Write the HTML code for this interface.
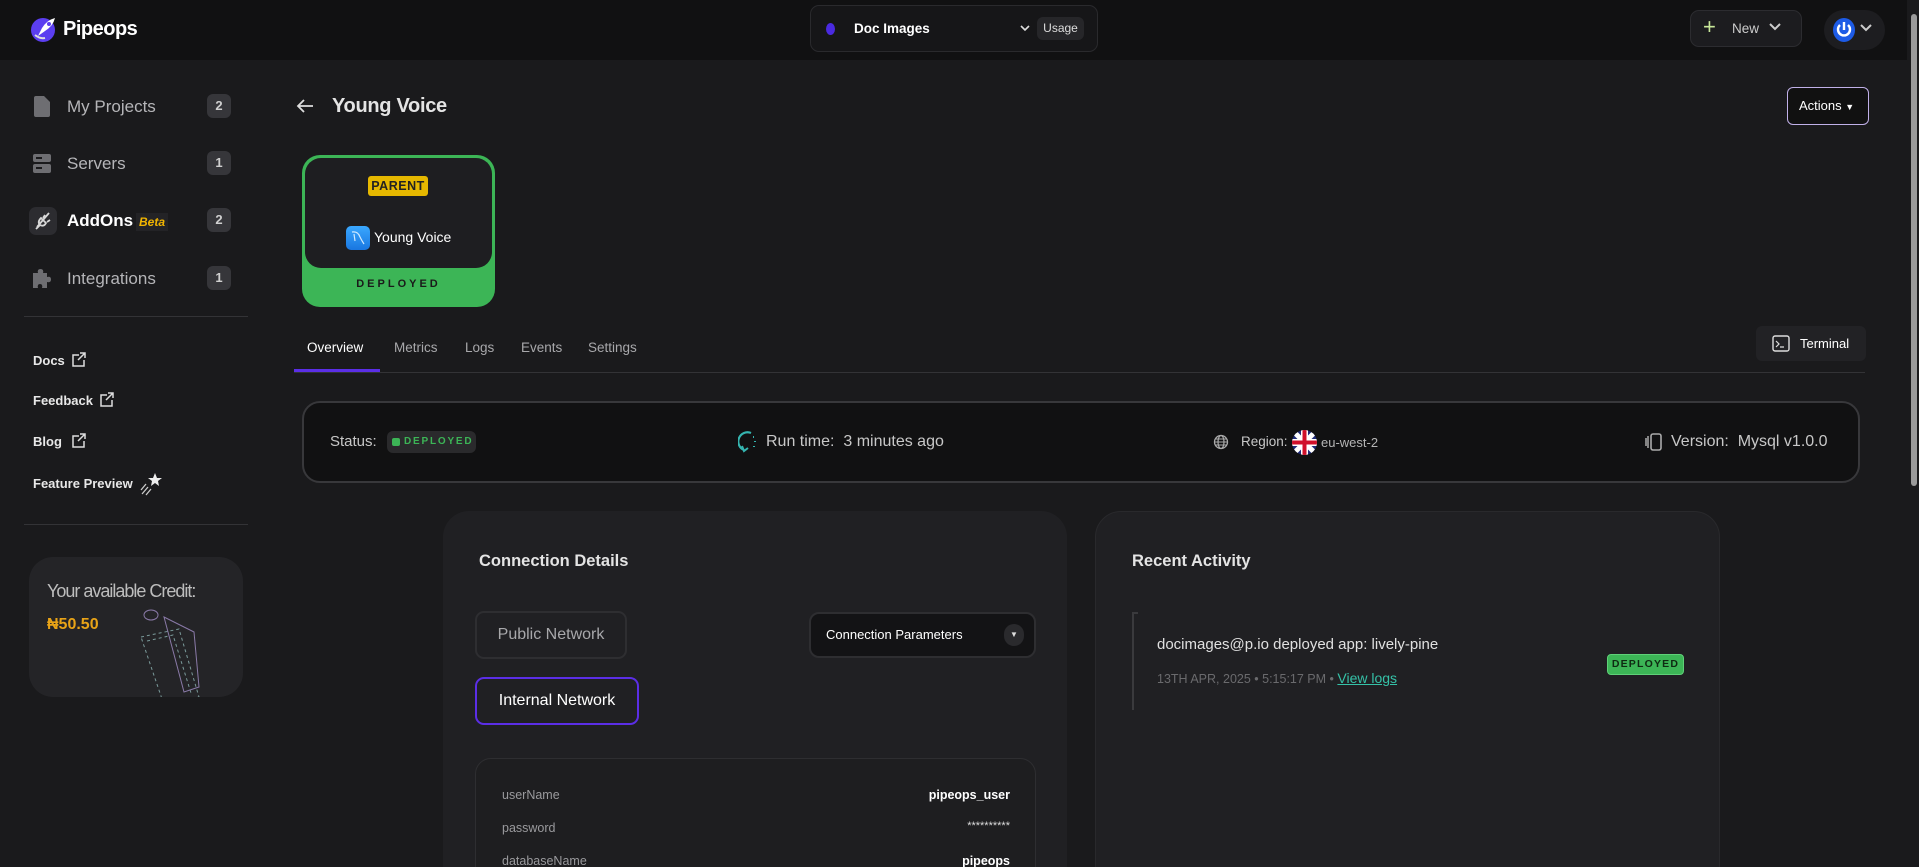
<!DOCTYPE html>
<html><head><meta charset="utf-8"><style>
*{box-sizing:border-box;margin:0;padding:0}
html,body{width:1919px;height:867px;overflow:hidden}
body{background:#1a1a1c;font-family:"Liberation Sans",sans-serif;color:#e8e8e8;position:relative}
.a{position:absolute}
.hdr{left:0;top:0;width:1907px;height:60px;background:#111112}
.sb{right:0;top:0;width:12px;height:867px;background:#1a1a1c}
.nav{font-size:17px;color:#b5b5b8;left:67px}
.badge{left:207px;width:24px;height:24px;border-radius:6px;background:#36363a;color:#d0d0d0;font-size:13px;font-weight:bold;text-align:center;line-height:24px}
.lnk{left:33px;font-size:13px;font-weight:bold;color:#e8e8e8}
.tab{top:340px;font-size:13.5px;color:#a8a8ab}
.row{font-size:12.5px}
</style></head><body>
<div class="a hdr"></div>
<svg class="a" style="left:30px;top:15px" width="28" height="28" viewBox="0 0 28 28"><circle cx="13" cy="15" r="12" fill="#5b3ef0"/><path d="M8 21 L12 13 Q17 5 25 3 Q23 11 15 16 Z" fill="#fff"/><circle cx="19" cy="9" r="2" fill="#5b3ef0"/><path d="M5 20 Q10 24 15 23" stroke="#ddd" stroke-width="2" fill="none"/></svg>
<div class="a" style="left:63px;top:18px;font-size:20px;font-weight:bold;color:#fff;letter-spacing:-0.5px">Pipeops</div>
<div class="a" style="left:810px;top:5px;width:288px;height:47px;border:1px solid #2a2a2d;border-radius:9px;background:#161618"></div>
<div class="a" style="left:826px;top:23px;width:9px;height:12px;border-radius:50%;background:#4a2ae0"></div>
<div class="a" style="left:854px;top:21px;font-size:13.5px;font-weight:bold;color:#fff">Doc Images</div>
<svg class="a" style="left:1020px;top:25px" width="10" height="7"><path d="M1 1 L5 5 L9 1" stroke="#ddd" stroke-width="1.6" fill="none"/></svg>
<div class="a" style="left:1037px;top:17px;width:47px;height:23px;border-radius:6px;background:#262629;font-size:12px;color:#ddd;text-align:center;line-height:23px">Usage</div>
<div class="a" style="left:1690px;top:10px;width:112px;height:37px;border:1px solid #2c2c30;border-radius:9px;background:#1c1c1f"></div>
<div class="a" style="left:1703px;top:16px;font-size:22px;color:#c8e89a;line-height:22px">+</div>
<div class="a" style="left:1732px;top:21px;font-size:13.5px;color:#ccc">New</div>
<svg class="a" style="left:1768px;top:22px" width="14" height="10"><path d="M2 2 L7 7 L12 2" stroke="#ccc" stroke-width="2" fill="none"/></svg>
<div class="a" style="left:1824px;top:10px;width:61px;height:40px;border-radius:20px;background:#1d1d20"></div>
<svg class="a" style="left:1832px;top:17px" width="24" height="26" viewBox="0 0 24 26"><ellipse cx="12" cy="13" rx="11" ry="12" fill="#1d5be6"/><path d="M8 8 A6 6 0 1 0 16 8" stroke="#fff" stroke-width="2.4" fill="none"/><path d="M12 5 V13" stroke="#fff" stroke-width="2.4"/></svg>
<svg class="a" style="left:1860px;top:24px" width="12" height="8"><path d="M1 1 L6 6 L11 1" stroke="#ccc" stroke-width="2" fill="none"/></svg>
<div class="a sb"></div>
<div class="a" style="right:2px;top:14px;width:6px;height:472px;border-radius:3px;background:#9a9a9a"></div>

<svg class="a" style="left:34px;top:96px" width="16" height="21"><path d="M0 2 Q0 0 2 0 H10 L16 6 V19 Q16 21 14 21 H2 Q0 21 0 19Z" fill="#6e6e72"/></svg>
<div class="a nav" style="top:97px">My Projects</div>
<div class="a badge" style="top:94px">2</div>
<svg class="a" style="left:33px;top:154px" width="18" height="19"><rect x="0" y="0" width="18" height="8" rx="2" fill="#6e6e72"/><rect x="0" y="10" width="18" height="9" rx="2" fill="#6e6e72"/><rect x="3" y="3" width="6" height="2" fill="#1a1a1c"/><rect x="3" y="13" width="6" height="2" fill="#1a1a1c"/></svg>
<div class="a nav" style="top:154px">Servers</div>
<div class="a badge" style="top:151px">1</div>
<div class="a" style="left:29px;top:207px;width:28px;height:28px;border-radius:7px;background:#2c2c30"></div>
<svg class="a" style="left:33px;top:211px" width="20" height="20" viewBox="0 0 20 20"><path d="M3 18 L7 14 M8 7 L13 12 Q11 16 7 14 Q4 11 8 7Z M12 4 L10 7 M17 9 L14 11 M16 2 L4 16" stroke="#d8d8d8" stroke-width="1.8" fill="none"/></svg>
<div class="a" style="left:67px;top:211px;font-size:17px;font-weight:bold;color:#fff">AddOns</div>
<div class="a" style="left:136px;top:213px;padding:0 3px;height:18px;background:#232326;color:#f0b400;font-size:12px;font-style:italic;font-weight:bold;line-height:18px">Beta</div>
<div class="a badge" style="top:208px">2</div>
<svg class="a" style="left:33px;top:269px" width="18" height="19" viewBox="0 0 18 19"><path d="M0 4 H5 Q4 0 7.5 0 Q11 0 10 4 H14 V8 Q18 7 18 10.5 Q18 14 14 13 V19 H9 Q10 15 7 15 Q4 15 5 19 H0Z" fill="#6e6e72"/></svg>
<div class="a nav" style="top:269px">Integrations</div>
<div class="a badge" style="top:266px">1</div>
<div class="a" style="left:24px;top:316px;width:224px;height:1px;background:#333336"></div>
<div class="a lnk" style="top:353px">Docs</div>
<div class="a lnk" style="top:393px">Feedback</div>
<div class="a lnk" style="top:434px">Blog</div>
<div class="a lnk" style="top:476px">Feature Preview</div>
<svg class="a" style="left:72px;top:352px" width="14" height="15"><path d="M7 3 H1 V14 H12 V8 M8 1 H13 V6 M13 1 L6 8" stroke="#ddd" stroke-width="1.5" fill="none"/></svg>
<svg class="a" style="left:100px;top:392px" width="14" height="15"><path d="M7 3 H1 V14 H12 V8 M8 1 H13 V6 M13 1 L6 8" stroke="#ddd" stroke-width="1.5" fill="none"/></svg>
<svg class="a" style="left:72px;top:433px" width="14" height="15"><path d="M7 3 H1 V14 H12 V8 M8 1 H13 V6 M13 1 L6 8" stroke="#ddd" stroke-width="1.5" fill="none"/></svg>
<svg class="a" style="left:140px;top:472px" width="22" height="24" viewBox="0 0 22 24"><path d="M15 1 L17 6 L22 6 L18 9 L19 14 L15 11 L11 14 L12 9 L8 6 L13 6Z" fill="#eee"/><path d="M2 22 L8 15 M6 23 L11 17 M1 18 L6 12" stroke="#ccc" stroke-width="1.3"/></svg>
<div class="a" style="left:24px;top:524px;width:224px;height:1px;background:#333336"></div>
<div class="a" style="left:29px;top:557px;width:214px;height:140px;border-radius:24px;background:#242427;overflow:hidden">
 <div class="a" style="left:18px;top:24px;font-size:18px;color:#bdbdbd;letter-spacing:-1px">Your available Credit:</div>
 <div class="a" style="left:18px;top:59px;font-size:16px;font-weight:bold;color:#e8a317">₦50.50</div>
 <svg class="a" style="left:110px;top:50px" width="110" height="95" viewBox="0 0 110 95"><ellipse cx="12" cy="8" rx="7" ry="5" stroke="#8a7aa8" fill="none"/><path d="M2 30 L40 22 L60 90 L24 95Z M8 34 L34 28 L52 86" stroke="#7a9a9a" fill="none" stroke-dasharray="3 3"/><path d="M25 10 L55 25 L60 80 L45 85Z" stroke="#8a7aa8" fill="none"/></svg>
</div>

<svg class="a" style="left:296px;top:98px" width="18" height="16"><path d="M17 8 H2 M8 2 L2 8 L8 14" stroke="#ddd" stroke-width="1.8" fill="none"/></svg>
<div class="a" style="left:332px;top:95px;font-size:20px;font-weight:bold;color:#e4e4e4;letter-spacing:-0.3px">Young Voice</div>
<div class="a" style="left:1787px;top:87px;width:82px;height:38px;border:1px solid #c0b0e8;border-radius:6px;background:#111;font-size:13px;color:#fff;line-height:36px;padding-left:11px">Actions <span style="font-size:9px">▼</span></div>

<div class="a" style="left:302px;top:155px;width:193px;height:152px;border-radius:18px;background:#3cb556"></div>
<div class="a" style="left:305px;top:158px;width:187px;height:110px;border-radius:16px;background:#1e1e21"></div>
<div class="a" style="left:368px;top:176px;width:60px;height:20px;border-radius:3px;background:#e6b800;color:#222;font-size:12.5px;font-weight:bold;text-align:center;line-height:20px;letter-spacing:0.5px">PARENT</div>
<div class="a" style="left:346px;top:226px;width:24px;height:24px;border-radius:5px;background:linear-gradient(#3aa8ff,#1976e0)"></div>
<svg class="a" style="left:349px;top:229px" width="18" height="18"><path d="M3 3 Q9 2 11 8 Q13 12 15 15 M5 5 L6 12" stroke="#d0eaff" stroke-width="1.2" fill="none"/></svg>
<div class="a" style="left:374px;top:229px;font-size:14px;color:#fff">Young Voice</div>
<div class="a" style="left:302px;top:278px;width:193px;text-align:center;font-size:11px;font-weight:bold;color:#1a1a1a;letter-spacing:3px">DEPLOYED</div>

<div class="a tab" style="left:307px;color:#fff">Overview</div>
<div class="a tab" style="left:394px">Metrics</div>
<div class="a tab" style="left:465px">Logs</div>
<div class="a tab" style="left:521px">Events</div>
<div class="a tab" style="left:588px">Settings</div>
<div class="a" style="left:294px;top:372px;width:1571px;height:1px;background:#333336"></div>
<div class="a" style="left:294px;top:369px;width:86px;height:3px;background:#5b2ee6"></div>
<div class="a" style="left:1756px;top:326px;width:110px;height:35px;border-radius:6px;background:#222225"></div>
<svg class="a" style="left:1772px;top:335px" width="18" height="17"><rect x="1" y="1" width="16" height="15" rx="2" stroke="#ddd" stroke-width="1.4" fill="none"/><path d="M4 6 L7 9 L4 12 M8 12 H12" stroke="#ddd" stroke-width="1.2" fill="none"/></svg>
<div class="a" style="left:1800px;top:336px;font-size:13px;color:#fff">Terminal</div>

<div class="a" style="left:302px;top:401px;width:1558px;height:82px;border:2px solid #38383b;border-radius:18px;background:#111112"></div>
<div class="a" style="left:330px;top:433px;font-size:15px;color:#c8c8c8">Status:</div>
<div class="a" style="left:387px;top:431px;width:89px;height:22px;border-radius:6px;background:#2a2a2c"></div>
<div class="a" style="left:392px;top:438px;width:8px;height:8px;border-radius:2px;background:#3cb556"></div>
<div class="a" style="left:404px;top:436px;font-size:10px;font-weight:bold;color:#3cb556;letter-spacing:1.8px">DEPLOYED</div>
<svg class="a" style="left:738px;top:431px" width="20" height="22"><path d="M13 2 A8 8 0 1 0 6 19" stroke="#35b5b0" stroke-width="2.2" fill="none"/><path d="M15 6 L16 6 M17 10 L17 11 M16 15 L16 16" stroke="#35b5b0" stroke-width="2"/><path d="M4 15 L6 20 L10 17" stroke="#35b5b0" stroke-width="2" fill="none"/></svg>
<div class="a" style="left:766px;top:433px;font-size:16px;color:#c8c8c8">Run time:&nbsp; 3 minutes ago</div>
<svg class="a" style="left:1213px;top:434px" width="16" height="16"><circle cx="8" cy="8" r="6.5" stroke="#aaa" stroke-width="1.3" fill="none"/><ellipse cx="8" cy="8" rx="3" ry="6.5" stroke="#aaa" stroke-width="1.2" fill="none"/><path d="M1.5 8 H14.5 M2.5 5 H13.5 M2.5 11 H13.5" stroke="#aaa" stroke-width="1"/></svg>
<div class="a" style="left:1241px;top:434px;font-size:13.5px;color:#c8c8c8">Region:</div>
<svg class="a" style="left:1292px;top:430px" width="25" height="25" viewBox="0 0 25 25"><clipPath id="c"><circle cx="12.5" cy="12.5" r="12.5"/></clipPath><g clip-path="url(#c)"><rect width="25" height="25" fill="#1e2a78"/><path d="M0 0 L25 25 M25 0 L0 25" stroke="#fff" stroke-width="5"/><path d="M12.5 0 V25 M0 12.5 H25" stroke="#fff" stroke-width="7"/><path d="M12.5 0 V25 M0 12.5 H25" stroke="#d0102a" stroke-width="4"/></g></svg>
<div class="a" style="left:1321px;top:435px;font-size:13px;color:#b5b5b5">eu-west-2</div>
<svg class="a" style="left:1645px;top:433px" width="17" height="18"><rect x="6" y="1" width="10" height="16" rx="2" stroke="#aaa" stroke-width="1.6" fill="none"/><path d="M3 3 V15 M1 5 V13" stroke="#aaa" stroke-width="1.5"/></svg>
<div class="a" style="left:1671px;top:433px;font-size:16px;color:#c8c8c8">Version:&nbsp; Mysql v1.0.0</div>

<div class="a" style="left:443px;top:511px;width:624px;height:380px;border-radius:26px;background:#202023"></div>
<div class="a" style="left:1095px;top:511px;width:625px;height:380px;border-radius:26px;background:#202023;border:1px solid #29292c"></div>
<div class="a" style="left:479px;top:552px;font-size:16.5px;font-weight:bold;color:#e4e4e4">Connection Details</div>
<div class="a" style="left:475px;top:611px;width:152px;height:48px;border:2px solid #2e2e31;border-radius:9px;font-size:16px;color:#a8a8ab;text-align:center;line-height:44px">Public Network</div>
<div class="a" style="left:475px;top:677px;width:164px;height:48px;border:2px solid #5b2ee6;border-radius:9px;font-size:16px;color:#fff;text-align:center;line-height:44px">Internal Network</div>
<div class="a" style="left:809px;top:612px;width:227px;height:46px;border:2px solid #2e2e31;border-radius:10px;background:#131315;font-size:13px;color:#fff;line-height:42px;padding-left:15px">Connection Parameters</div>
<div class="a" style="left:1004px;top:624px;width:20px;height:22px;border-radius:10px;background:#2a2a2d;color:#ddd;font-size:8px;text-align:center;line-height:22px">▼</div>
<div class="a" style="left:475px;top:758px;width:561px;height:130px;border:1px solid #2e2e31;border-radius:16px;background:#1e1e20"></div>
<div class="a row" style="left:502px;top:788px;color:#9a9a9d">userName</div>
<div class="a row" style="left:502px;top:821px;color:#9a9a9d">password</div>
<div class="a row" style="left:502px;top:854px;color:#9a9a9d">databaseName</div>
<div class="a row" style="right:909px;top:788px;color:#fff;font-weight:bold">pipeops_user</div>
<div class="a row" style="right:909px;top:820px;color:#ddd;font-size:11px">**********</div>
<div class="a row" style="right:909px;top:854px;color:#fff;font-weight:bold">pipeops</div>

<div class="a" style="left:1132px;top:552px;font-size:16.5px;font-weight:bold;color:#e4e4e4">Recent Activity</div>
<div class="a" style="left:1132px;top:612px;width:2px;height:98px;background:#3a3a3d"></div>
<div class="a" style="left:1132px;top:612px;width:6px;height:2px;background:#3a3a3d"></div>
<div class="a" style="left:1157px;top:636px;font-size:15px;color:#e0e0e0">docimages@p.io deployed app: lively-pine</div>
<div class="a" style="left:1157px;top:670px;font-size:12.5px;color:#6a6a6d">13TH APR, 2025 • 5:15:17 PM • <span style="color:#35c2a8;text-decoration:underline;font-size:14px">View logs</span></div>
<div class="a" style="left:1607px;top:654px;width:77px;height:21px;border-radius:4px;background:#3cb556;border:1px solid #5fd078;color:#0f2a12;font-size:10.5px;font-weight:bold;text-align:center;line-height:19px;letter-spacing:1.2px">DEPLOYED</div>
</body></html>
